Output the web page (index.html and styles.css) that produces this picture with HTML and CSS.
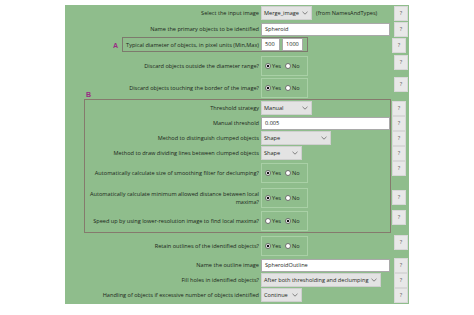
FILE: index.html
```html
<!DOCTYPE html>
<html lang="en">
<head>
    <meta charset="UTF-8">
    <title>IdentifyPrimaryObjects</title>
    <link rel="stylesheet" href="styles.css">
</head>
<body>
<div class="panel">
    <!--输入图像-->
    <div class="row r16">
        <div class="label">Select the input image</div>
        <div class="ctrl">
            <span class="select w50">Merge_image<svg viewBox="0 0 6 4"><path d="M0.5 0.8 L3 3.2 L5.5 0.8" /></svg></span>
            <span class="note">(from NamesAndTypes)</span>
        </div>
        <span class="help">?</span>
    </div>
    <div class="row r16">
        <div class="label">Name the primary objects to be identified</div>
        <div class="ctrl"><span class="input">Spheroid</span></div>
        <span class="help">?</span>
    </div>
    <!--A 框-->
    <div class="row-a">
        <span class="tag">A</span>
        <div class="abox">
            <div class="label">Typical diameter of objects, in pixel units (Min,Max)</div>
            <span class="input small">500</span>
            <span class="input small w20">1000</span>
        </div>
        <span class="help">?</span>
    </div>
    <div class="row r23">
        <div class="label">Discard objects outside the diameter range?</div>
        <div class="ctrl">
            <span class="radios"><i class="dot on"></i>Yes<i class="dot"></i>No</span>
        </div>
        <span class="help">?</span>
    </div>
    <div class="row r21">
        <div class="label">Discard objects touching the border of the image?</div>
        <div class="ctrl">
            <span class="radios"><i class="dot on"></i>Yes<i class="dot"></i>No</span>
        </div>
        <span class="help top0">?</span>
    </div>
    <!--B 框-->
    <div class="group">
        <span class="tag tag-b">B</span>
        <div class="row r15">
            <div class="label">Threshold strategy</div>
            <div class="ctrl"><span class="select w50">Manual<svg viewBox="0 0 6 4"><path d="M0.5 0.8 L3 3.2 L5.5 0.8" /></svg></span></div>
            <span class="help">?</span>
        </div>
        <div class="row r15">
            <div class="label">Manual threshold</div>
            <div class="ctrl"><span class="input">0.005</span></div>
            <span class="help">?</span>
        </div>
        <div class="row r15">
            <div class="label">Method to distinguish clumped objects</div>
            <div class="ctrl"><span class="select w70">Shape<svg viewBox="0 0 6 4"><path d="M0.5 0.8 L3 3.2 L5.5 0.8" /></svg></span></div>
            <span class="help">?</span>
        </div>
        <div class="row r15">
            <div class="label">Method to draw dividing lines between clumped objects</div>
            <div class="ctrl"><span class="select w41">Shape<svg viewBox="0 0 6 4"><path d="M0.5 0.8 L3 3.2 L5.5 0.8" /></svg></span></div>
            <span class="help">?</span>
        </div>
        <div class="row r26">
            <div class="label">Automatically calculate size of smoothing filter for declumping?</div>
            <div class="ctrl">
                <span class="radios"><i class="dot on"></i>Yes<i class="dot"></i>No</span>
            </div>
            <span class="help">?</span>
        </div>
        <div class="row r23">
            <div class="label">Automatically calculate minimum allowed distance between local<br>maxima?</div>
            <div class="ctrl">
                <span class="radios"><i class="dot on"></i>Yes<i class="dot"></i>No</span>
            </div>
            <span class="help top4">?</span>
        </div>
        <div class="row r23">
            <div class="label">Speed up by using lower-resolution image to find local maxima?</div>
            <div class="ctrl">
                <span class="radios"><i class="dot"></i>Yes<i class="dot on"></i>No</span>
            </div>
            <span class="help">?</span>
        </div>
    </div>
    <div class="row r23">
        <div class="label">Retain outlines of the identified objects?</div>
        <div class="ctrl">
            <span class="radios"><i class="dot on"></i>Yes<i class="dot"></i>No</span>
        </div>
        <span class="help">?</span>
    </div>
    <div class="row r15">
        <div class="label">Name the outline image</div>
        <div class="ctrl"><span class="input">SpheroidOutline</span></div>
        <span class="help">?</span>
    </div>
    <div class="row r15">
        <div class="label">Fill holes in identified objects?</div>
        <div class="ctrl"><span class="select w120">After both thresholding and declumping<svg viewBox="0 0 6 4"><path d="M0.5 0.8 L3 3.2 L5.5 0.8" /></svg></span></div>
        <span class="help">?</span>
    </div>
    <div class="row r15">
        <div class="label">Handling of objects if excessive number of objects identified</div>
        <div class="ctrl"><span class="select w41">Continue<svg viewBox="0 0 6 4"><path d="M0.5 0.8 L3 3.2 L5.5 0.8" /></svg></span></div>
        <span class="help">?</span>
    </div>
</div>
</body>
</html>
```

FILE: styles.css
```css
body{
    margin: 0;
    background: #fff;
    font-family: "Open Sans", "Noto Sans", sans-serif;
    font-size: 5.6px;
    color: #1b261a;
}
/*绿色面板*/
.panel{
    margin: 5px 0 0 65px;
    width: 344px;
    height: 299px;
    box-sizing: border-box;
    background: #8fbd8c;
}
/*每一行: 标签 控件 帮助*/
.row{
    display: grid;
    grid-template-columns: 194px 131px 14px;
    column-gap: 2px;
    align-items: center;
}
.r15{ height: 15px; }
.r16{ height: 16px; }
.r21{ height: 21px; }
.r23{ height: 23px; }
.r26{ height: 26px; }
.label{
    text-align: right;
    white-space: nowrap;
    line-height: 8px;
}
.ctrl{
    display: flex;
    align-items: center;
    gap: 4px;
}
/*问号按钮*/
.help{
    align-self: start;
    margin-top: 1px;
    height: 15px;
    background: #e8e8e8;
    border: 1px solid #d8d8d8;
    box-sizing: border-box;
    text-align: center;
    line-height: 13px;
    color: #555;
}
.help.top0{ margin-top: 0; }
.help.top4{ margin-top: 4px; }
/*下拉框*/
.select{
    display: flex;
    align-items: center;
    justify-content: space-between;
    gap: 2px;
    height: 14px;
    box-sizing: border-box;
    padding: 0 3px 0 2px;
    background: #e3e3e3;
    border: 1px solid #cfcfcf;
    white-space: nowrap;
}
.select svg{
    width: 6px;
    height: 4px;
    flex: none;
    fill: none;
    stroke: #666;
    stroke-width: 0.8;
}
.w41{ width: 41px; }
.w50{ width: 51px; }
.w70{ width: 70px; }
.w120{ width: 120px; }
.note{
    white-space: nowrap;
}
/*输入框*/
.input{
    display: block;
    width: 129px;
    height: 13px;
    box-sizing: border-box;
    padding-left: 3px;
    background: #fff;
    border: 1px solid #a9a9a9;
    line-height: 11px;
}
.input.small{
    width: 19px;
    flex: none;
}
.input.w20{ width: 21px; }
/*A 框*/
.row-a{
    display: flex;
    align-items: center;
    height: 17px;
}
.tag{
    color: #9a2a84;
    font-family: "Liberation Sans", sans-serif;
    font-weight: bold;
    font-size: 7px;
}
.row-a .tag{
    margin-left: 48px;
    width: 9px;
}
.abox{
    display: flex;
    align-items: center;
    justify-content: flex-end;
    gap: 2px;
    width: 186px;
    height: 15px;
    box-sizing: border-box;
    border: 1px solid #7d7a6d;
    padding-right: 4px;
    margin-top: -2px;
}
.row-a .help{
    margin-left: auto;
    margin-right: 3px;
    width: 14px;
}
/*单选框组*/
.radios{
    display: flex;
    align-items: center;
    width: 47px;
    height: 20px;
    box-sizing: border-box;
    border: 1px solid #a9d0a6;
    padding-left: 3px;
}
.dot{
    width: 6px;
    height: 6px;
    box-sizing: border-box;
    border-radius: 50%;
    background: #fff;
    border: 1px solid #6d6d6d;
    margin-right: 1px;
}
.radios .dot:nth-of-type(2){
    margin-left: 4px;
}
.dot.on{
    background: radial-gradient(circle, #111 0 1.4px, #fff 1.6px);
}
/*B 框*/
.group{
    position: relative;
    margin: 1px 0 1px 19px;
    width: 307px;
    box-sizing: border-box;
    border: 1px solid #857a6d;
}
.group .row{
    grid-template-columns: 174px 129px 14px;
}
.tag-b{
    position: absolute;
    top: -9px;
    left: 1px;
}
```
